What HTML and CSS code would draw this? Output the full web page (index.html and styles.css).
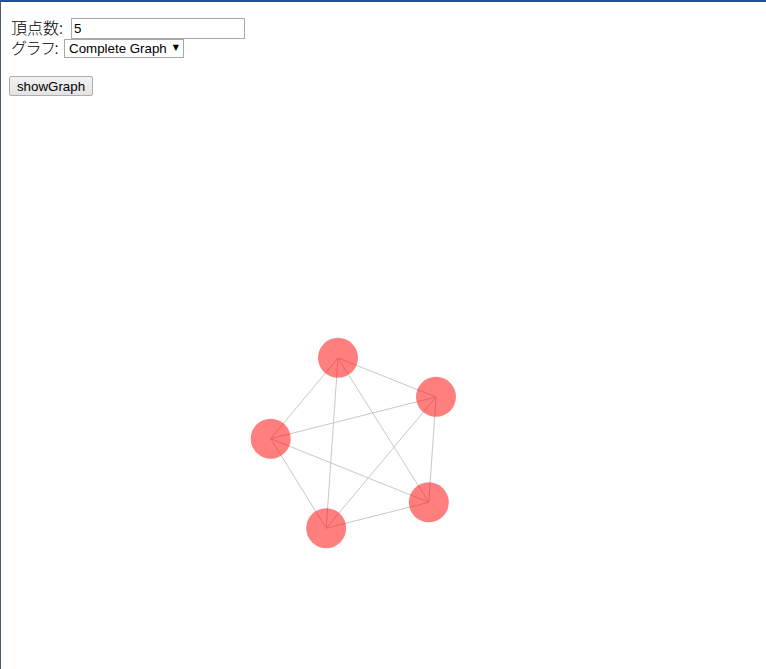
FILE: index.html
```html
<!DOCTYPE html>
<html lang="ja">
<head>
<meta charset="utf-8">
<title>Graph</title>
<link rel="stylesheet" href="styles.css">
</head>
<body>
<div class="controls">
  <div class="row row-count">
    <span class="label label-count">頂点数:</span>
    <input class="text-input" type="text" value="5">
  </div>
  <div class="row row-graph">
    <span class="label label-graph">グラフ:</span>
    <span class="select-wrap">
      <select class="graph-select">
        <option>Complete Graph</option>
      </select>
      <span class="select-arrow">▼</span>
    </span>
  </div>
  <button class="show-btn" type="button">showGraph</button>
</div>
<svg class="graph" width="757" height="567" viewBox="0 0 757 567">
  <g class="edges">
    <line x1="329" y1="258" x2="427" y2="297"/>
    <line x1="329" y1="258" x2="261.7" y2="338.7"/>
    <line x1="329" y1="258" x2="419.8" y2="402.3"/>
    <line x1="329" y1="258" x2="317.2" y2="428.2"/>
    <line x1="427" y1="297" x2="261.7" y2="338.7"/>
    <line x1="427" y1="297" x2="419.8" y2="402.3"/>
    <line x1="427" y1="297" x2="317.2" y2="428.2"/>
    <line x1="261.7" y1="338.7" x2="419.8" y2="402.3"/>
    <line x1="261.7" y1="338.7" x2="317.2" y2="428.2"/>
    <line x1="419.8" y1="402.3" x2="317.2" y2="428.2"/>
  </g>
  <g class="nodes">
    <circle cx="329" cy="257.8" r="20"/>
    <circle cx="427" cy="296.8" r="20"/>
    <circle cx="261.7" cy="338.7" r="20"/>
    <circle cx="419.8" cy="402.3" r="20"/>
    <circle cx="317.2" cy="428.2" r="20"/>
  </g>
</svg>
</body>
</html>
```
FILE: styles.css
```css
html, body {
  margin: 0;
  padding: 0;
  background: #ffffff;
}

body {
  min-height: 100vh;
  box-sizing: border-box;
  border-top: 2px solid #1f5197;
  border-left: 1px solid #4d5c6b;
  padding: 16px 0 0 8px;
  font-family: "Noto Sans CJK JP", "Noto Sans", sans-serif;
  font-size: 16px;
  color: #000;
  overflow: hidden;
}

.controls {
  display: flex;
  flex-direction: column;
  align-items: flex-start;
}

.row {
  display: flex;
  align-items: center;
}

.row-count {
  height: 21px;
}

.row-graph {
  height: 19px;
}

.label {
  display: block;
  line-height: 16px;
  padding-left: 2px;
  box-sizing: border-box;
  font-weight: 300;
}

.label-count {
  width: 62px;
  margin-top: -4px;
}

.label-graph {
  width: 55px;
  margin-top: -3px;
  letter-spacing: -1.5px;
}

.text-input {
  box-sizing: border-box;
  width: 174px;
  height: 21px;
  margin: 0;
  padding: 1px 2px;
  border: 1px solid #a9a9a9;
  font-family: "Liberation Sans", Arial, sans-serif;
  font-size: 13.33px;
  color: #000;
  outline: none;
}

.select-wrap {
  position: relative;
  display: block;
}

.graph-select {
  -webkit-appearance: none;
  appearance: none;
  box-sizing: border-box;
  display: block;
  width: 120px;
  height: 19px;
  margin: 0;
  padding: 0 0 0 4px;
  border: 1px solid #a9a9a9;
  border-radius: 0;
  background: #ffffff;
  font-family: "Liberation Sans", Arial, sans-serif;
  font-size: 13.33px;
  line-height: 17px;
  color: #000;
}

.select-arrow {
  position: absolute;
  right: 5px;
  top: 3px;
  font-family: "DejaVu Sans", sans-serif;
  font-size: 8px;
  line-height: 12px;
  color: #000;
  pointer-events: none;
}

.show-btn {
  box-sizing: border-box;
  width: 84px;
  height: 20px;
  margin: 18px 0 0 0;
  padding: 0 6px;
  border: 1px solid #adadad;
  border-radius: 2px;
  background: linear-gradient(#f2f2f2, #e3e3e3);
  font-family: "Liberation Sans", Arial, sans-serif;
  font-size: 13.33px;
  color: #000;
}

.graph {
  display: block;
  margin-top: 4px;
}

.edges line {
  stroke: #c8c8c8;
  stroke-width: 1;
}

.nodes circle {
  fill: #ff0000;
  fill-opacity: 0.5;
}
```
